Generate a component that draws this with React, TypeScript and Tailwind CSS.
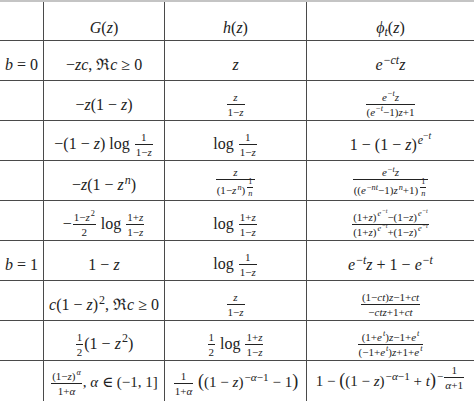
import React from "react";

const M = "−";

function Frac({ n, d, cls = "text-[11px]" }: { n: React.ReactNode; d: React.ReactNode; cls?: string }) {
  return (
    <span className={`inline-flex flex-col items-center align-middle leading-none mx-[1px] ${cls}`}>
      <span className="px-[1px] pb-[1px] whitespace-nowrap">{n}</span>
      <span className="w-full border-t border-[#222]"></span>
      <span className="px-[1px] pt-[2px] whitespace-nowrap">{d}</span>
    </span>
  );
}

function Sup({ children, cls = "text-[75%]" }: { children: React.ReactNode; cls?: string }) {
  return <sup className={`${cls} ml-[1px]`}>{children}</sup>;
}

const Emt = () => (
  <>
    <i>e</i>
    <Sup>
      {M}
      <i>t</i>
    </Sup>
  </>
);

function Cell({
  children,
  last,
  bottom,
  pad = "pt-[8px]",
}: {
  children?: React.ReactNode;
  last?: boolean;
  bottom?: boolean;
  pad?: string;
}) {
  return (
    <div
      className={`flex items-center justify-center whitespace-nowrap ${pad} ${last ? "" : "border-r border-[#4a4a4a]"} ${
        bottom ? "" : "border-b border-[#4a4a4a]"
      }`}
    >
      {children}
    </div>
  );
}

export default function App() {
  const rows: React.ReactNode[][] = [
    [
      <span>
        <i>b</i> = 0
      </span>,
      <span>
        {M}
        <i>zc</i>, ℜ<i>c</i> ≥ 0
      </span>,
      <i>z</i>,
      <span>
        <i>e</i>
        <Sup>
          {M}
          <i>ct</i>
        </Sup>
        <i>z</i>
      </span>,
    ],
    [
      null,
      <span>
        {M}
        <i>z</i>(1 {M} <i>z</i>)
      </span>,
      <Frac n={<i>z</i>} d={<span>1{M}<i>z</i></span>} />,
      <Frac
        n={
          <span>
            <Emt />
            <i>z</i>
          </span>
        }
        d={
          <span>
            (<Emt />{M}1)<i>z</i>+1
          </span>
        }
      />,
    ],
    [
      null,
      <span>
        {M}(1 {M} <i>z</i>) log <Frac n="1" d={<span>1{M}<i>z</i></span>} />
      </span>,
      <span>
        log <Frac n="1" d={<span>1{M}<i>z</i></span>} />
      </span>,
      <span>
        1 {M} (1 {M} <i>z</i>)
        <Sup>
          <i>e</i>
          <sup className="text-[80%]">
            {M}
            <i>t</i>
          </sup>
        </Sup>
      </span>,
    ],
    [
      null,
      <span>
        {M}
        <i>z</i>(1 {M} <i>z</i>
        <Sup>
          <i>n</i>
        </Sup>
        )
      </span>,
      <Frac
        n={<i>z</i>}
        d={
          <span>
            (1{M}<i>z</i>
            <Sup>
              <i>n</i>
            </Sup>
            )
            <Sup>
              <Frac n="1" d={<i>n</i>} cls="text-[100%]" />
            </Sup>
          </span>
        }
      />,
      <Frac
        n={
          <span>
            <Emt />
            <i>z</i>
          </span>
        }
        d={
          <span>
            ((<i>e</i>
            <Sup>
              {M}
              <i>nt</i>
            </Sup>
            {M}1)<i>z</i>
            <Sup>
              <i>n</i>
            </Sup>
            +1)
            <Sup>
              <Frac n="1" d={<i>n</i>} cls="text-[100%]" />
            </Sup>
          </span>
        }
      />,
    ],
    [
      null,
      <span>
        {M}
        <Frac
          n={
            <span>
              1{M}<i>z</i>
              <Sup>2</Sup>
            </span>
          }
          d="2"
        />{" "}
        log <Frac n={<span>1+<i>z</i></span>} d={<span>1{M}<i>z</i></span>} />
      </span>,
      <span>
        log <Frac n={<span>1+<i>z</i></span>} d={<span>1{M}<i>z</i></span>} />
      </span>,
      <Frac
        n={
          <span>
            (1+<i>z</i>)
            <Sup>
              <Emt />
            </Sup>
            {M}(1{M}<i>z</i>)
            <Sup>
              <Emt />
            </Sup>
          </span>
        }
        d={
          <span>
            (1+<i>z</i>)
            <Sup>
              <Emt />
            </Sup>
            +(1{M}<i>z</i>)
            <Sup>
              <Emt />
            </Sup>
          </span>
        }
      />,
    ],
    [
      <span>
        <i>b</i> = 1
      </span>,
      <span>
        1 {M} <i>z</i>
      </span>,
      <span>
        log <Frac n="1" d={<span>1{M}<i>z</i></span>} />
      </span>,
      <span>
        <Emt />
        <i>z</i> + 1 {M} <Emt />
      </span>,
    ],
    [
      null,
      <span>
        <i>c</i>(1 {M} <i>z</i>)<Sup>2</Sup>, ℜ<i>c</i> ≥ 0
      </span>,
      <Frac n={<i>z</i>} d={<span>1{M}<i>z</i></span>} />,
      <Frac
        n={
          <span>
            (1{M}<i>ct</i>)<i>z</i>{M}1+<i>ct</i>
          </span>
        }
        d={
          <span>
            {M}
            <i>ctz</i>+1+<i>ct</i>
          </span>
        }
      />,
    ],
    [
      null,
      <span>
        <Frac n="1" d="2" />
        (1 {M} <i>z</i>
        <Sup>2</Sup>)
      </span>,
      <span>
        <Frac n="1" d="2" /> log <Frac n={<span>1+<i>z</i></span>} d={<span>1{M}<i>z</i></span>} />
      </span>,
      <Frac
        n={
          <span>
            (1+<i>e</i>
            <Sup>
              <i>t</i>
            </Sup>
            )<i>z</i>{M}1+<i>e</i>
            <Sup>
              <i>t</i>
            </Sup>
          </span>
        }
        d={
          <span>
            ({M}1+<i>e</i>
            <Sup>
              <i>t</i>
            </Sup>
            )<i>z</i>+1+<i>e</i>
            <Sup>
              <i>t</i>
            </Sup>
          </span>
        }
      />,
    ],
    [
      null,
      <span className="text-[15px]">
        <Frac
          n={
            <span>
              (1{M}<i>z</i>)
              <Sup>
                <i>α</i>
              </Sup>
            </span>
          }
          d={
            <span>
              1+<i>α</i>
            </span>
          }
        />
        , <i>α</i> ∈ ({M}1, 1]
      </span>,
      <span className="text-[15px]">
        <Frac n="1" d={<span>1+<i>α</i></span>} />{" "}
        <span className="text-[18px]">(</span>(1 {M} <i>z</i>)
        <Sup>
          {M}
          <i>α</i>
          {M}1
        </Sup>{" "}
        {M} 1<span className="text-[18px]">)</span>
      </span>,
      <span className="text-[15px]">
        1 {M} <span className="text-[18px]">(</span>(1 {M} <i>z</i>)
        <Sup>
          {M}
          <i>α</i>
          {M}1
        </Sup>{" "}
        + <i>t</i>
        <span className="text-[18px]">)</span>
        <Sup>
          {M}
          <Frac n="1" d={<span><i>α</i>+1</span>} cls="text-[100%]" />
        </Sup>
      </span>,
    ],
  ];

  return (
    <div className="w-[474px] h-[401px] bg-white text-[#222] [font-family:'Liberation_Serif','DejaVu_Serif',serif] text-[16px] leading-none overflow-hidden">
      <div className="border-t-2 border-[#c4c4c4] grid grid-cols-[44px_121px_142px_167px] grid-rows-[39px_repeat(9,40px)]">
        <Cell pad="pt-[14px]" />
        <Cell pad="pt-[14px]">
          <span>
            <i>G</i>(<i>z</i>)
          </span>
        </Cell>
        <Cell pad="pt-[14px]">
          <span>
            <i>h</i>(<i>z</i>)
          </span>
        </Cell>
        <Cell pad="pt-[14px]" last>
          <span>
            <i>ϕ</i>
            <sub className="text-[75%]">
              <i>t</i>
            </sub>
            (<i>z</i>)
          </span>
        </Cell>
        {rows.map((r, i) =>
          r.map((c, j) => (
            <Cell
              key={`${i}-${j}`}
              last={j === 3}
              bottom={i === rows.length - 1}
              pad={i === rows.length - 1 ? "pt-[5px]" : "pt-[8px]"}
            >
              {c}
            </Cell>
          ))
        )}
      </div>
    </div>
  );
}
